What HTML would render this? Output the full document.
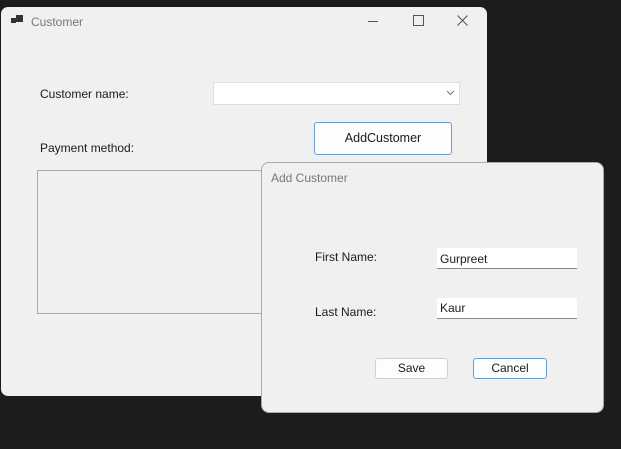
<!DOCTYPE html>
<html><head><style>
body{margin:0;width:621px;height:449px;background:#1c1c1c;position:relative;overflow:hidden;font-family:"Liberation Sans",sans-serif;font-size:12px;color:#1a1a1a}
.a{position:absolute}
.win{left:1px;top:7px;width:486px;height:389px;background:#f0f0f0;border-radius:7px;overflow:hidden}
.dlg{left:262px;top:163px;width:341px;height:249px;background:#f0f0f0;border-radius:7px;overflow:hidden;box-shadow:0 0 0 1px #aaa}
.box{background:#fff;border-bottom:1px solid #8a8a8a}
.btn{background:#fdfdfd;border:1px solid #d0d0d0;border-radius:3px;text-align:center;box-sizing:border-box}
</style></head><body>
<div class="a win">
  <div class="a" style="left:10px;top:11px;width:5px;height:5px;background:#333"></div>
  <div class="a" style="left:15px;top:8px;width:7px;height:7px;background:#333"></div>
  <div class="a" style="left:30px;top:8px;color:#777;font-size:12px">Customer</div>
  <div class="a" style="left:367px;top:14px;width:10px;height:1px;background:#555"></div>
  <div class="a" style="left:412px;top:8px;width:9px;height:9px;border:1px solid #555"></div>
  <svg class="a" style="left:456px;top:8px" width="11" height="11"><path d="M0.5 0.5L10.5 10.5M10.5 0.5L0.5 10.5" stroke="#555" stroke-width="1"/></svg>
  <div class="a" style="left:39px;top:80px">Customer name:</div>
  <div class="a" style="left:212px;top:75px;width:245px;height:21px;background:#fff;border:1px solid #ddd"></div>
  <svg class="a" style="left:445px;top:83px" width="9" height="6"><path d="M1 1L4.5 4.5L8 1" stroke="#777" fill="none"/></svg>
  <div class="a btn" style="left:313px;top:115px;width:138px;height:33px;border-color:#6a9ed0;line-height:31px;font-size:12.5px">AddCustomer</div>
  <div class="a" style="left:39px;top:134px">Payment method:</div>
  <div class="a" style="left:36px;top:163px;width:260px;height:142px;border:1px solid #aaa;background:#f0f0f0"></div>
</div>
<div class="a dlg">
  <div class="a" style="left:9px;top:8px;color:#777">Add Customer</div>
  <div class="a" style="left:53px;top:87px">First Name:</div>
  <div class="a box" style="left:175px;top:85px;width:140px;height:20px"><span class="a" style="left:3px;top:4px">Gurpreet</span></div>
  <div class="a" style="left:53px;top:142px">Last Name:</div>
  <div class="a box" style="left:175px;top:135px;width:140px;height:20px"><span class="a" style="left:3px;top:3px">Kaur</span></div>
  <div class="a btn" style="left:113px;top:195px;width:73px;height:21px;line-height:19px">Save</div>
  <div class="a btn" style="left:211px;top:195px;width:74px;height:21px;line-height:19px;border-color:#6a9ed0">Cancel</div>
</div>
</body></html>
